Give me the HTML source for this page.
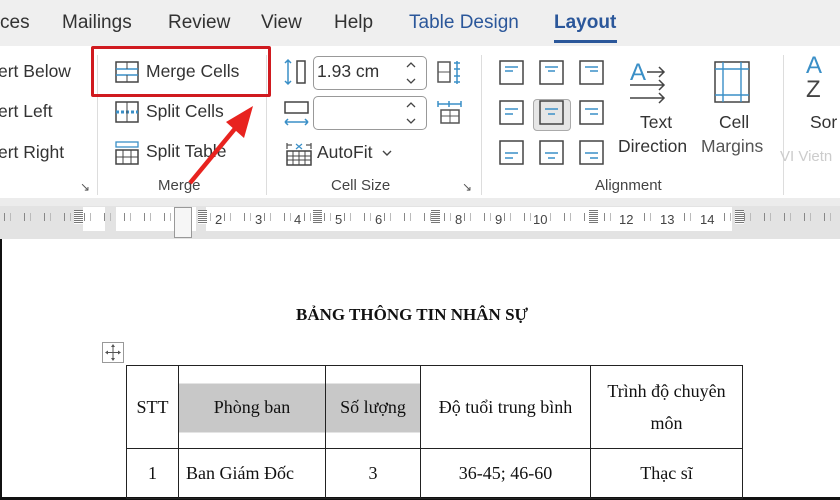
<!DOCTYPE html>
<html><head><meta charset="utf-8"><style>
*{margin:0;padding:0;box-sizing:border-box}
body{width:840px;height:500px;overflow:hidden;position:relative;background:#fff;font-family:"Segoe UI","Liberation Sans","DejaVu Sans",sans-serif;color:#333}
.a{position:absolute;white-space:nowrap}
.tab{font-size:19px;color:#323232;top:12px}
.rb{font-size:17.5px;color:#333}
.lbl{font-size:15px;color:#444}
.sep{position:absolute;width:1px;background:#ddd}
.serif{font-family:"Liberation Serif","Times New Roman",serif;color:#111}
td{border:1px solid #222;text-align:center;font-family:"Liberation Serif",serif;font-size:18px;color:#111;padding:0}
.rn{position:absolute;top:212px;font-size:13px;color:#444;font-family:"Liberation Sans",sans-serif}
.sp{position:absolute;font-size:12px;color:#444;line-height:13px;text-align:center}
</style></head><body>
<div class="a" style="left:0;top:0;width:840px;height:46px;background:#efefef"></div>
<div class="a tab" style="left:0">ces</div>
<div class="a tab" style="left:62px">Mailings</div>
<div class="a tab" style="left:168px">Review</div>
<div class="a tab" style="left:261px">View</div>
<div class="a tab" style="left:334px">Help</div>
<div class="a tab" style="left:409px;color:#2b579a">Table Design</div>
<div class="a tab" style="left:554px;color:#2b579a;font-weight:bold">Layout</div>
<div class="a" style="left:554px;top:40px;width:63px;height:3px;background:#2b579a"></div>
<div class="a" style="left:0;top:46px;width:840px;height:154px;background:#fff"></div>
<div class="a" style="left:0;top:198px;width:840px;height:8px;background:#ececec"></div>
<div class="a rb" style="left:-2px;top:61px">ert Below</div>
<div class="a rb" style="left:-2px;top:101px">ert Left</div>
<div class="a rb" style="left:-2px;top:142px">ert Right</div>
<div class="a" style="left:80px;top:180px;font-size:12px;color:#555">&#8600;</div>
<div class="sep" style="left:97px;top:55px;height:140px"></div>
<div class="sep" style="left:266px;top:55px;height:140px"></div>
<div class="sep" style="left:481px;top:55px;height:140px"></div>
<div class="sep" style="left:783px;top:55px;height:140px"></div>
<svg class="a" style="left:115px;top:61px" width="24" height="22"><rect x="1" y="1" width="22" height="20" fill="none" stroke="#444" stroke-width="1.5"/><line x1="1" y1="8" x2="23" y2="8" stroke="#3a8fc7" stroke-width="1.5"/><line x1="1" y1="14" x2="23" y2="14" stroke="#3a8fc7" stroke-width="1.5"/><line x1="12" y1="1" x2="12" y2="8" stroke="#444"/><line x1="12" y1="14" x2="12" y2="21" stroke="#444"/></svg>
<div class="a rb" style="left:146px;top:61px">Merge Cells</div>
<svg class="a" style="left:115px;top:101px" width="24" height="22"><rect x="1" y="1" width="22" height="20" fill="none" stroke="#444" stroke-width="1.5"/><line x1="1" y1="11" x2="23" y2="11" stroke="#3a8fc7" stroke-width="3" stroke-dasharray="3 2"/><line x1="12" y1="1" x2="12" y2="21" stroke="#444"/></svg>
<div class="a rb" style="left:146px;top:101px">Split Cells</div>
<svg class="a" style="left:115px;top:141px" width="24" height="24"><rect x="1" y="1" width="22" height="5" fill="none" stroke="#3a8fc7" stroke-width="1.3"/><rect x="1" y="9" width="22" height="14" fill="none" stroke="#444" stroke-width="1.5"/><line x1="1" y1="16" x2="23" y2="16" stroke="#444"/><line x1="8" y1="9" x2="8" y2="23" stroke="#444"/><line x1="16" y1="9" x2="16" y2="23" stroke="#444"/></svg>
<div class="a rb" style="left:146px;top:141px">Split Table</div>
<div class="a lbl" style="left:158px;top:177px">Merge</div>
<div class="a" style="left:91px;top:46px;width:180px;height:51px;border:3.5px solid #d01a1f;border-radius:2px"></div>
<svg class="a" style="left:180px;top:100px" width="80" height="90"><line x1="10" y1="83" x2="58" y2="25" stroke="#e8231f" stroke-width="4.5"/><polygon points="73,6 46,22 64,38" fill="#e8231f"/></svg>
<svg class="a" style="left:284px;top:58px" width="26" height="28"><path d="M4 2v24M1 5l3-3 3 3M1 23l3 3 3-3" stroke="#3a8fc7" fill="none" stroke-width="1.5"/><rect x="13" y="3" width="8" height="22" fill="none" stroke="#444" stroke-width="1.5"/></svg>
<div class="a" style="left:313px;top:56px;width:114px;height:34px;border:1px solid #999;border-radius:5px"></div>
<div class="a" style="left:317px;top:61px;font-size:17.5px;color:#333">1.93 cm</div>
<svg class="a" style="left:405px;top:60px" width="12" height="26"><path d="M2 7l4-4 4 4M2 19l4 4 4-4" stroke="#444" fill="none" stroke-width="1.3"/></svg>
<div class="a" style="left:313px;top:96px;width:114px;height:34px;border:1px solid #999;border-radius:5px"></div>
<svg class="a" style="left:405px;top:100px" width="12" height="26"><path d="M2 7l4-4 4 4M2 19l4 4 4-4" stroke="#444" fill="none" stroke-width="1.3"/></svg>
<svg class="a" style="left:437px;top:60px" width="26" height="26"><rect x="1" y="2" width="12" height="20" fill="none" stroke="#555" stroke-width="1.5"/><line x1="1" y1="12" x2="13" y2="12" stroke="#555"/><path d="M20 1v23M17 3h6M17 22h6M17 9h6M17 16h6" stroke="#3a8fc7" stroke-width="1.5"/></svg>
<svg class="a" style="left:283px;top:100px" width="28" height="28"><rect x="2" y="2" width="23" height="11" fill="none" stroke="#444" stroke-width="1.5"/><path d="M2 22h23M2 22l3-3M2 22l3 3M25 22l-3-3M25 22l-3 3" stroke="#3a8fc7" fill="none" stroke-width="1.5"/></svg>
<svg class="a" style="left:437px;top:100px" width="26" height="26"><path d="M1 4h23M1 1v6M12 1v6M24 1v6" stroke="#3a8fc7" stroke-width="1.5"/><rect x="4" y="10" width="18" height="13" fill="none" stroke="#555" stroke-width="1.5"/><line x1="13" y1="10" x2="13" y2="23" stroke="#555"/><line x1="4" y1="16" x2="22" y2="16" stroke="#555"/></svg>
<svg class="a" style="left:285px;top:141px" width="28" height="26"><path d="M2 2v6M26 2v6M2 4h5M21 4h5" stroke="#555" stroke-width="1.3"/><path d="M11 3l6 5M17 3l-6 5" stroke="#3a8fc7" stroke-width="1.2"/><rect x="2" y="10" width="24" height="14" fill="none" stroke="#444" stroke-width="1.5"/><path d="M2 15h24M2 19h24M8 10v14M14 10v14M20 10v14" stroke="#444"/></svg>
<div class="a rb" style="left:317px;top:142px">AutoFit</div>
<svg class="a" style="left:381px;top:149px" width="12" height="8"><path d="M2 2l4 4 4-4" stroke="#444" fill="none" stroke-width="1.4"/></svg>
<div class="a lbl" style="left:331px;top:177px">Cell Size</div>
<div class="a" style="left:462px;top:180px;font-size:12px;color:#555">&#8600;</div>
<div class="a" style="left:533px;top:99px;width:38px;height:32px;background:#e6e6e6;border:1px solid #aaa;border-radius:4px"></div>
<svg class="a" style="left:499px;top:60px" width="110" height="106">
<g fill="none" stroke="#444" stroke-width="1.5">
<rect x="1" y="1" width="23" height="23"/><rect x="41" y="1" width="23" height="23"/><rect x="81" y="1" width="23" height="23"/>
<rect x="1" y="41" width="23" height="23"/><rect x="41" y="41" width="23" height="23"/><rect x="81" y="41" width="23" height="23"/>
<rect x="1" y="81" width="23" height="23"/><rect x="41" y="81" width="23" height="23"/><rect x="81" y="81" width="23" height="23"/>
</g>
<g stroke="#3a8fc7" stroke-width="1.6">
<path d="M6 7h13M6 11h8M46 7h13M49 11h7M86 7h13M91 11h8"/>
<path d="M6 49h13M6 54h8M46 49h13M49 54h7M86 49h13M91 54h8"/>
<path d="M6 93h13M6 98h8M46 93h13M49 98h7M86 93h13M91 98h8"/>
</g></svg>
<svg class="a" style="left:628px;top:58px" width="50" height="46"><text x="2" y="22" font-family="Liberation Sans,sans-serif" font-size="24" fill="#3a8fc7">A</text><path d="M19 14h17M31 9l5 5-5 5M2 27h34M31 22l5 5-5 5M2 40h34M31 35l5 5-5 5" stroke="#444" fill="none" stroke-width="1.5"/></svg>
<div class="a rb" style="left:640px;top:112px">Text</div>
<div class="a rb" style="left:618px;top:136px">Direction</div>
<svg class="a" style="left:714px;top:60px" width="38" height="44"><rect x="1" y="2" width="34" height="40" fill="none" stroke="#444" stroke-width="1.5"/><path d="M9 2v40M27 2v40M1 9h34M1 35h34" stroke="#3a8fc7" stroke-width="1.4"/></svg>
<div class="a rb" style="left:719px;top:112px">Cell</div>
<div class="a rb" style="left:701px;top:136px;color:#555">Margins</div>
<div class="a lbl" style="left:595px;top:177px">Alignment</div>
<div class="a" style="left:806px;top:52px;font-size:24px;color:#3a8fc7">A</div>
<div class="a" style="left:806px;top:76px;font-size:24px;color:#444">Z</div>
<div class="a rb" style="left:810px;top:112px">Sor</div>
<div class="a" style="left:780px;top:148px;font-size:15px;color:#ccc">VI Vietn</div>
<!-- ruler -->
<div class="a" style="left:0;top:206px;width:840px;height:33px;background:#e3e3e3"></div>
<div class="a" style="left:83px;top:207px;width:22px;height:24px;background:#fff"></div>
<div class="a" style="left:116px;top:207px;width:80px;height:24px;background:#fff"></div>
<div class="a" style="left:206px;top:207px;width:48px;height:24px;background:#fff"></div>
<div class="a" style="left:206px;top:207px;width:490px;height:24px;background:#fff"></div>
<div class="a" style="left:520px;top:207px;width:212px;height:24px;background:#fff"></div>
<div class="a" style="left:0;top:213px;width:840px;height:8px;background:repeating-linear-gradient(90deg,transparent 0 4px,#888 4px 5px,transparent 5px 10px,#bbb 10px 11px,transparent 11px 20px)"></div>
<div class="a" style="left:74px;top:210px;width:9px;height:14px;background:repeating-linear-gradient(#777 0 1px,#fff 1px 2px)"></div>
<div class="a" style="left:174px;top:207px;width:18px;height:31px;border:1px solid #999;background:#f6f6f6"></div>
<div class="a" style="left:198px;top:210px;width:9px;height:14px;background:repeating-linear-gradient(#777 0 1px,#fff 1px 2px)"></div>
<div class="a" style="left:313px;top:210px;width:9px;height:14px;background:repeating-linear-gradient(#777 0 1px,#fff 1px 2px)"></div>
<div class="a" style="left:431px;top:210px;width:9px;height:14px;background:repeating-linear-gradient(#777 0 1px,#fff 1px 2px)"></div>
<div class="a" style="left:589px;top:210px;width:9px;height:14px;background:repeating-linear-gradient(#777 0 1px,#fff 1px 2px)"></div>
<div class="a" style="left:735px;top:210px;width:9px;height:14px;background:repeating-linear-gradient(#777 0 1px,#fff 1px 2px)"></div>
<span class="rn" style="left:215px;background:#fff">2</span><span class="rn" style="left:255px;background:#fff">3</span><span class="rn" style="left:294px;background:#fff">4</span><span class="rn" style="left:335px;background:#fff">5</span><span class="rn" style="left:375px;background:#fff">6</span><span class="rn" style="left:455px;background:#fff">8</span><span class="rn" style="left:495px;background:#fff">9</span><span class="rn" style="left:533px;background:#fff">10</span><span class="rn" style="left:619px;background:#fff">12</span><span class="rn" style="left:660px;background:#fff">13</span><span class="rn" style="left:700px;background:#fff">14</span>
<!-- document -->
<div class="a" style="left:0;top:239px;width:2px;height:261px;background:#111"></div>
<div class="a" style="left:0;top:497px;width:840px;height:3px;background:#111"></div>
<div class="a serif" style="left:296px;top:305px;font-size:17px;font-weight:bold">BẢNG THÔNG TIN NHÂN SỰ</div>
<svg class="a" style="left:102px;top:342px" width="23" height="21"><rect x="0.5" y="0.5" width="21" height="20" fill="#fff" stroke="#999"/><path d="M11 3v15M4 10.5h14" stroke="#555"/><path d="M11 2l-2 3h4zM11 19l-2-3h4zM3 10.5l3-2v4zM19 10.5l-3-2v4z" fill="#555"/></svg>
<table class="a" style="left:126px;top:365px;border-collapse:collapse;width:617px">
<tr style="height:83px"><td style="width:52px">STT</td><td style="width:147px;background:linear-gradient(#fff 17px,#c8c8c8 17px,#c8c8c8 66px,#fff 66px)">Phòng ban</td><td style="width:95px;background:linear-gradient(#fff 17px,#c8c8c8 17px,#c8c8c8 66px,#fff 66px)">Số lượng</td><td style="width:170px">Độ tuổi trung bình</td><td style="line-height:32px">Trình độ chuyên<br>môn</td></tr>
<tr style="height:50px"><td>1</td><td style="text-align:left;padding-left:7px">Ban Giám Đốc</td><td>3</td><td>36-45; 46-60</td><td>Thạc sĩ</td></tr>
</table>
</body></html>
